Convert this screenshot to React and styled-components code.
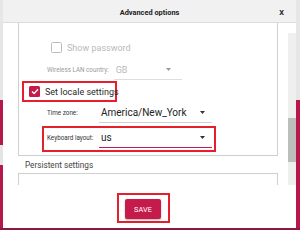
import React from "react";
import styled, { createGlobalStyle } from "styled-components";

const Global = createGlobalStyle`
  html, body { margin: 0; padding: 0; background: #e9e9e9; }
  body { font-family: Roboto, "Liberation Sans", sans-serif; }
  * { box-sizing: border-box; }
`;

const CRIMSON = "#c51a4a";
const RED = "#e51f2b";

const Page = styled.div`
  width: 300px;
  height: 230px;
  display: flex;
  flex-direction: column;
  overflow: hidden;
`;

const Stage = styled.div`
  height: 228px;
  display: flex;
`;

const Strip = styled.div`
  width: ${(p) => p.$w}px;
  background: ${(p) => p.$bg};
`;

const BottomLine = styled.div`
  height: 2px;
  background: #8c1a3c;
`;

const Dialog = styled.div`
  flex: 1;
  display: flex;
  flex-direction: column;
  background: #fff;
`;

const Header = styled.div`
  height: 23px;
  display: grid;
  grid-template-columns: 1fr auto 1fr;
  align-items: center;
  background: #f1f1f1;
  border-bottom: 1px solid #dcdcdc;
  padding-top: 2px;
`;

const Title = styled.div`
  grid-column: 2;
  font-size: 7.4px;
  font-weight: 700;
  color: #222;
`;

const Close = styled.div`
  justify-self: end;
  padding-right: 12px;
  font-size: 7.4px;
  font-weight: 700;
  color: #222;
`;

const Body = styled.div`
  height: 162px;
  display: flex;
  gap: 10px;
  padding-left: 15px;
`;

const Content = styled.div`
  flex: 1;
  overflow: hidden;
  display: flex;
  flex-direction: column;
`;

const Scrollbar = styled.div`
  width: 8px;
  margin-top: 10px;
  background: #efefef;
  display: flex;
  flex-direction: column;
`;

const Thumb = styled.div`
  margin-top: 85px;
  height: 44px;
  background: #bdbdbd;
`;

const Box = styled.div`
  border: 1px solid #cfcfcf;
  border-top: ${(p) => (p.$open ? "none" : "1px solid #cfcfcf")};
  display: flex;
  flex-direction: column;
  margin-top: ${(p) => p.$mt || 0}px;
  padding-bottom: ${(p) => p.$pb || 0}px;
  min-height: ${(p) => p.$minh || 0}px;
  flex-shrink: 0;
`;

const CheckRow = styled.div`
  display: flex;
  align-items: center;
  gap: 5px;
  height: 11px;
  margin-top: ${(p) => p.$mt || 0}px;
  padding-left: ${(p) => p.$pl || 0}px;
`;

const CheckBox = styled.div`
  width: 11px;
  height: 11px;
  border-radius: 1.5px;
  border: ${(p) => (p.$checked ? "none" : "1px solid #bdbdbd")};
  background: ${(p) => (p.$checked ? CRIMSON : "#fff")};
  display: flex;
  align-items: center;
  justify-content: center;
`;

const CheckText = styled.span`
  font-size: 9px;
  color: ${(p) => (p.$disabled ? "#b9b9b9" : "#2a2a2a")};
  white-space: nowrap;
`;

const FieldRow = styled.div`
  display: flex;
  align-items: center;
  height: 20px;
  margin-top: ${(p) => p.$mt || 0}px;
  padding-left: ${(p) => p.$pl || 0}px;
`;

const Label = styled.span`
  width: ${(p) => (p.$w ? `${p.$w}px` : "auto")};
  margin-right: ${(p) => p.$mr || 0}px;
  font-size: 6.3px;
  color: ${(p) => (p.$disabled ? "#9a9a9a" : "#333")};
  white-space: nowrap;
  flex-shrink: 0;
`;

const Combo = styled.div`
  width: ${(p) => p.$w}px;
  height: 20px;
  display: flex;
  align-items: center;
  justify-content: space-between;
  padding-left: 2px;
  padding-right: ${(p) => p.$pr}px;
  border-bottom: 1px solid ${(p) => p.$line};
`;

const Value = styled.span`
  font-size: ${(p) => p.$size || 10}px;
  color: ${(p) => (p.$disabled ? "#b9b9b9" : "#222")};
  white-space: nowrap;
`;

const Highlight = styled.div`
  align-self: flex-start;
  border: 2px solid ${RED};
  margin-left: ${(p) => p.$ml || 0}px;
  margin-top: ${(p) => p.$mt || 0}px;
  padding: ${(p) => p.$pad};
  width: ${(p) => (p.$w ? `${p.$w}px` : "auto")};
  height: ${(p) => (p.$h ? `${p.$h}px` : "auto")};
  display: flex;
  align-items: center;
`;

const SectionTitle = styled.div`
  margin-top: 4px;
  padding-left: 7px;
  font-size: 8.2px;
  line-height: 10px;
  color: #444;
`;

const Footer = styled.div`
  flex: 1;
  padding-top: 8px;
  padding-left: 114px;
  display: flex;
  align-items: flex-start;
`;

const SaveButton = styled.button`
  width: 36px;
  height: 20px;
  border: none;
  border-radius: 2px;
  background: ${CRIMSON};
  color: #fff;
  font-family: Roboto, "Liberation Sans", sans-serif;
  font-size: 7.4px;
  padding: 0;
  box-shadow: 0 1px 2px rgba(0, 0, 0, 0.3);
`;

const Arrow = ({ color }) => (
  <svg width="5" height="3" viewBox="0 0 5 3">
    <path d="M0 0 H5 L2.5 3 Z" fill={color} />
  </svg>
);

const Tick = () => (
  <svg width="8" height="7" viewBox="0 0 8 7">
    <path d="M1 3.6 L3.1 5.6 L7 1.2" stroke="#fff" strokeWidth="1.4" fill="none" />
  </svg>
);

export default function App() {
  return (
    <Page>
      <Global />
      <Stage>
        <Strip
          $w={3}
          $bg="linear-gradient(to bottom, #e6e6e6 0 100px, #b8174a 100px 145px, #e4e4e4 145px 165px, #b8174a 165px)"
        />
        <Dialog>
          <Header>
            <Title>Advanced options</Title>
            <Close>X</Close>
          </Header>
          <Body>
            <Content>
              <Box $open $pb={3}>
                <CheckRow $mt={19} $pl={32}>
                  <CheckBox />
                  <CheckText $disabled>Show password</CheckText>
                </CheckRow>
                <FieldRow $mt={7} $pl={28}>
                  <Label $disabled $mr={5}>Wireless LAN country:</Label>
                  <Combo $w={68} $pr={11} $line="#dedede">
                    <Value $disabled $size={9}>GB</Value>
                    <Arrow color="#9a9a9a" />
                  </Combo>
                </FieldRow>
                <Highlight $ml={3} $mt={1} $w={95} $h={21} $pad="0 0 0 5px">
                  <CheckRow>
                    <CheckBox $checked>
                      <Tick />
                    </CheckBox>
                    <CheckText>Set locale settings</CheckText>
                  </CheckRow>
                </Highlight>
                <FieldRow $mt={1} $pl={28}>
                  <Label $w={52}>Time zone:</Label>
                  <Combo $w={113} $pr={7} $line="#cfcfcf">
                    <Value>America/New_York</Value>
                    <Arrow color="#333" />
                  </Combo>
                </FieldRow>
                <Highlight $ml={23} $mt={3} $w={174} $pad="0 2px 2px 3px">
                  <FieldRow>
                    <Label $w={52}>Keyboard layout:</Label>
                    <Combo $w={113} $pr={7} $line={CRIMSON}>
                      <Value>us</Value>
                      <Arrow color="#333" />
                    </Combo>
                  </FieldRow>
                </Highlight>
              </Box>
              <SectionTitle>Persistent settings</SectionTitle>
              <Box $mt={3} $minh={40} />
            </Content>
            <Scrollbar>
              <Thumb />
            </Scrollbar>
          </Body>
          <Footer>
            <Highlight $pad="4px 7px 2px 6px">
              <SaveButton>SAVE</SaveButton>
            </Highlight>
          </Footer>
        </Dialog>
        <Strip
          $w={4}
          $bg="linear-gradient(to bottom, #e6e6e6 0 100px, #b8174a 100px)"
        />
      </Stage>
      <BottomLine />
    </Page>
  );
}
